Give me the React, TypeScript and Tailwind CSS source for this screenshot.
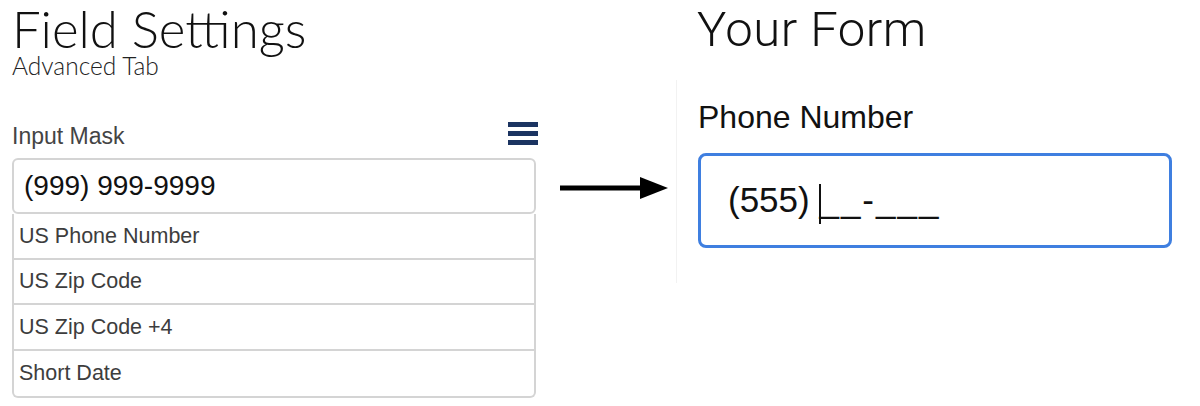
import React from 'react';

const maskOptions = ['US Phone Number', 'US Zip Code', 'US Zip Code +4', 'Short Date'];

function MenuIcon() {
  return (
    <svg width="30" height="24" viewBox="0 0 30 24" className="text-[#1b3461]">
      <rect x="0" y="0" width="30" height="5" fill="currentColor" />
      <rect x="0" y="9" width="30" height="5" fill="currentColor" />
      <rect x="0" y="18" width="30" height="5" fill="currentColor" />
    </svg>
  );
}

function Arrow() {
  return (
    <svg width="110" height="26" viewBox="0 0 110 26">
      <rect x="0" y="10.5" width="82" height="5" fill="#000" />
      <polygon points="80,2 108,13 80,24" fill="#000" />
    </svg>
  );
}

export default function App() {
  return (
    <div className="w-[1200px] h-[406px] bg-white flex overflow-hidden">
      {/* left: settings */}
      <div className="w-[548px] pl-3 shrink-0">
        <h1 className="font-['Lato',sans-serif] font-light text-[51px] leading-[60px] text-[#111] -mt-[1px]">
          Field Settings
        </h1>
        <div className="font-['Lato',sans-serif] font-light text-[24.5px] leading-[28px] text-[#222] -mt-[7px]">
          Advanced Tab
        </div>

        <div className="mt-[42px] flex items-end justify-between w-[525px]">
          <span className="font-['Liberation_Sans',sans-serif] text-[23px] leading-[28px] text-[#444]">Input Mask</span>
          <span className="mb-[4px] mr-[-1px]"><MenuIcon /></span>
        </div>

        <div className="mt-[8px] w-[524px] font-['Liberation_Sans',sans-serif]">
          <div className="h-[56px] border-2 border-[#d4d4d4] rounded-[6px] flex items-center pl-[10px] text-[28px] text-[#111]">
            (999) 999-9999
          </div>
          <div className="border-2 border-t-0 border-[#d4d4d4] rounded-b-[6px]">
            {maskOptions.map((opt, i) => (
              <div
                key={opt}
                className={`h-[45.5px] flex items-center pl-[5px] text-[21.5px] text-[#3d3d3d] ${i < maskOptions.length - 1 ? 'border-b-2 border-[#d4d4d4]' : ''}`}
              >
                {opt}
              </div>
            ))}
          </div>
        </div>
      </div>

      {/* middle: arrow */}
      <div className="w-[128px] shrink-0 pt-[175px] pl-[12px]">
        <Arrow />
      </div>

      {/* right: preview */}
      <div className="flex-1">
        <h2 className="font-['Roboto',sans-serif] font-light text-[49px] leading-[60px] text-[#111] pl-[21px] tracking-[0.5px]">
          Your Form
        </h2>
        <div className="mt-[20px] border-l border-[#f2f2f2] h-[203px] pl-[21px] pt-[19px] w-[510px]">
          <div className="font-['Liberation_Sans',sans-serif] text-[32px] leading-[36px] text-[#111]">Phone Number</div>
          <div className="mt-[18px] w-[474px] h-[95px] border-[3px] border-[#3f7fe0] rounded-[8px] flex items-center pl-[27px] font-['Liberation_Sans',sans-serif] text-[35px] text-[#111]">
            <span>(555)&nbsp;</span>
            <span className="inline-block w-[2px] h-[40px] bg-[#111] translate-y-[3px]" />
            <span className="-ml-[2px] tracking-[2px]">__-___</span>
          </div>
        </div>
      </div>
    </div>
  );
}
